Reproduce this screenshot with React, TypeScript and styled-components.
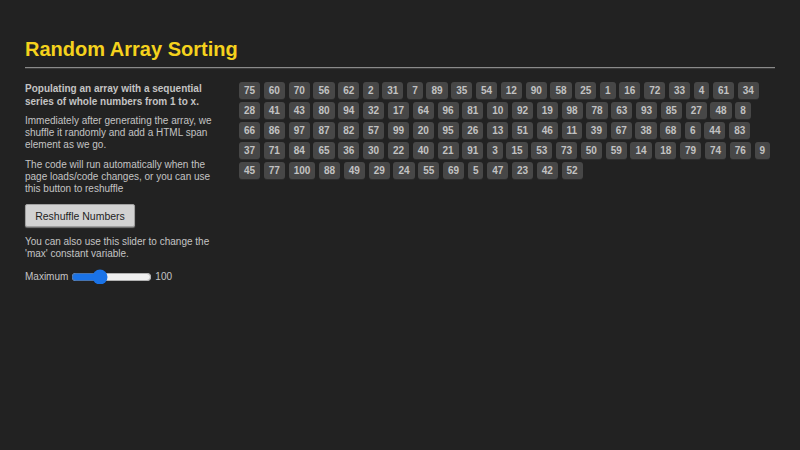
import React, { useState } from 'react';
import styled, { createGlobalStyle } from 'styled-components';

const GlobalStyle = createGlobalStyle`
    html, body {
        margin: 0;
        padding: 0;
        background: #222222;
    }
    body {
        font-family: 'Liberation Sans', Arial, sans-serif;
        color: #c4c4c4;
    }
`;

const StyledPage = styled.div`
    padding: 36px 25px 0 25px;
`;

const StyledTitle = styled.h1`
    margin: 0;
    font-size: 20px;
    font-weight: bold;
    color: #f5d21d;
    line-height: 26px;
    padding-bottom: 5px;
    border-bottom: 1px solid #8a8a8a;
    box-shadow: 0 1px 0 #3a3a3a;
`;

const StyledColumns = styled.div`
    display: flex;
    gap: 22px;
    margin-top: 14px;
`;

const StyledSide = styled.div`
    width: 192px;
    flex-shrink: 0;
    font-size: 10px;
    line-height: 12px;
    padding-top: 1px;
`;

const StyledLead = styled.p`
    margin: 0 0 7px 0;
    font-weight: bold;
    line-height: 12.5px;
`;

const StyledText = styled.p`
    margin: 0 0 8px 0;
`;

const StyledButton = styled.button`
    display: block;
    margin: 9px 0 9px 0;
    height: 23px;
    width: 110px;
    padding: 0;
    font-family: 'Liberation Sans', Arial, sans-serif;
    font-size: 10.5px;
    color: #1e1e1e;
    background: #d2d2d2;
    border: 1px solid #a0a0a0;
    border-radius: 2px;
    box-shadow: 0 1px 1px #777;
    cursor: pointer;
`;

const StyledSliderRow = styled.label`
    display: flex;
    align-items: center;
    gap: 3px;
    margin-top: 10px;
`;

const StyledRange = styled.input`
    width: 81px;
    height: 14px;
    margin: 0;
    accent-color: #1a73e8;
`;

const StyledNumbers = styled.div`
    flex: 1;
    display: flex;
    flex-wrap: wrap;
    gap: 3px 3.7px;
    align-content: flex-start;
`;

const StyledChip = styled.span`
    display: inline-flex;
    align-items: center;
    justify-content: center;
    height: 17px;
    padding: 0 5px;
    font-size: 10px;
    font-weight: bold;
    color: #c2c2c2;
    background: #474747;
    border-radius: 3px;
    box-shadow: 0 1px 0 #2c2c2c;
`;

const numbers = [
    75, 60, 70, 56, 62, 2, 31, 7, 89, 35, 54, 12, 90, 58, 25, 1, 16, 72, 33, 4, 61, 34,
    28, 41, 43, 80, 94, 32, 17, 64, 96, 81, 10, 92, 19, 98, 78, 63, 93, 85, 27, 48, 8,
    66, 86, 97, 87, 82, 57, 99, 20, 95, 26, 13, 51, 46, 11, 39, 67, 38, 68, 6, 44, 83,
    37, 71, 84, 65, 36, 30, 22, 40, 21, 91, 3, 15, 53, 73, 50, 59, 14, 18, 79, 74, 76, 9,
    45, 77, 100, 88, 49, 29, 24, 55, 69, 5, 47, 23, 42, 52,
];

export default function App() {
    const [max, setMax] = useState(100);

    return (
        <>
            <GlobalStyle />
            <StyledPage>
                <StyledTitle>Random Array Sorting</StyledTitle>
                <StyledColumns>
                    <StyledSide>
                        <StyledLead>
                            Populating an array with a sequential series of whole
                            numbers from 1 to x.
                        </StyledLead>
                        <StyledText>
                            Immediately after generating the array, we shuffle it
                            randomly and add a HTML span element as we go.
                        </StyledText>
                        <StyledText>
                            The code will run automatically when the page loads/code
                            changes, or you can use this button to reshuffle
                        </StyledText>
                        <StyledButton>Reshuffle Numbers</StyledButton>
                        <StyledText>
                            You can also use this slider to change the 'max'
                            constant variable.
                        </StyledText>
                        <StyledSliderRow>
                            Maximum
                            <StyledRange
                                type="range"
                                min={10}
                                max={300}
                                value={max}
                                onChange={(e) => setMax(Number(e.target.value))}
                            />
                            {max}
                        </StyledSliderRow>
                    </StyledSide>
                    <StyledNumbers>
                        {numbers.map((n) => (
                            <StyledChip key={n}>{n}</StyledChip>
                        ))}
                    </StyledNumbers>
                </StyledColumns>
            </StyledPage>
        </>
    );
}
